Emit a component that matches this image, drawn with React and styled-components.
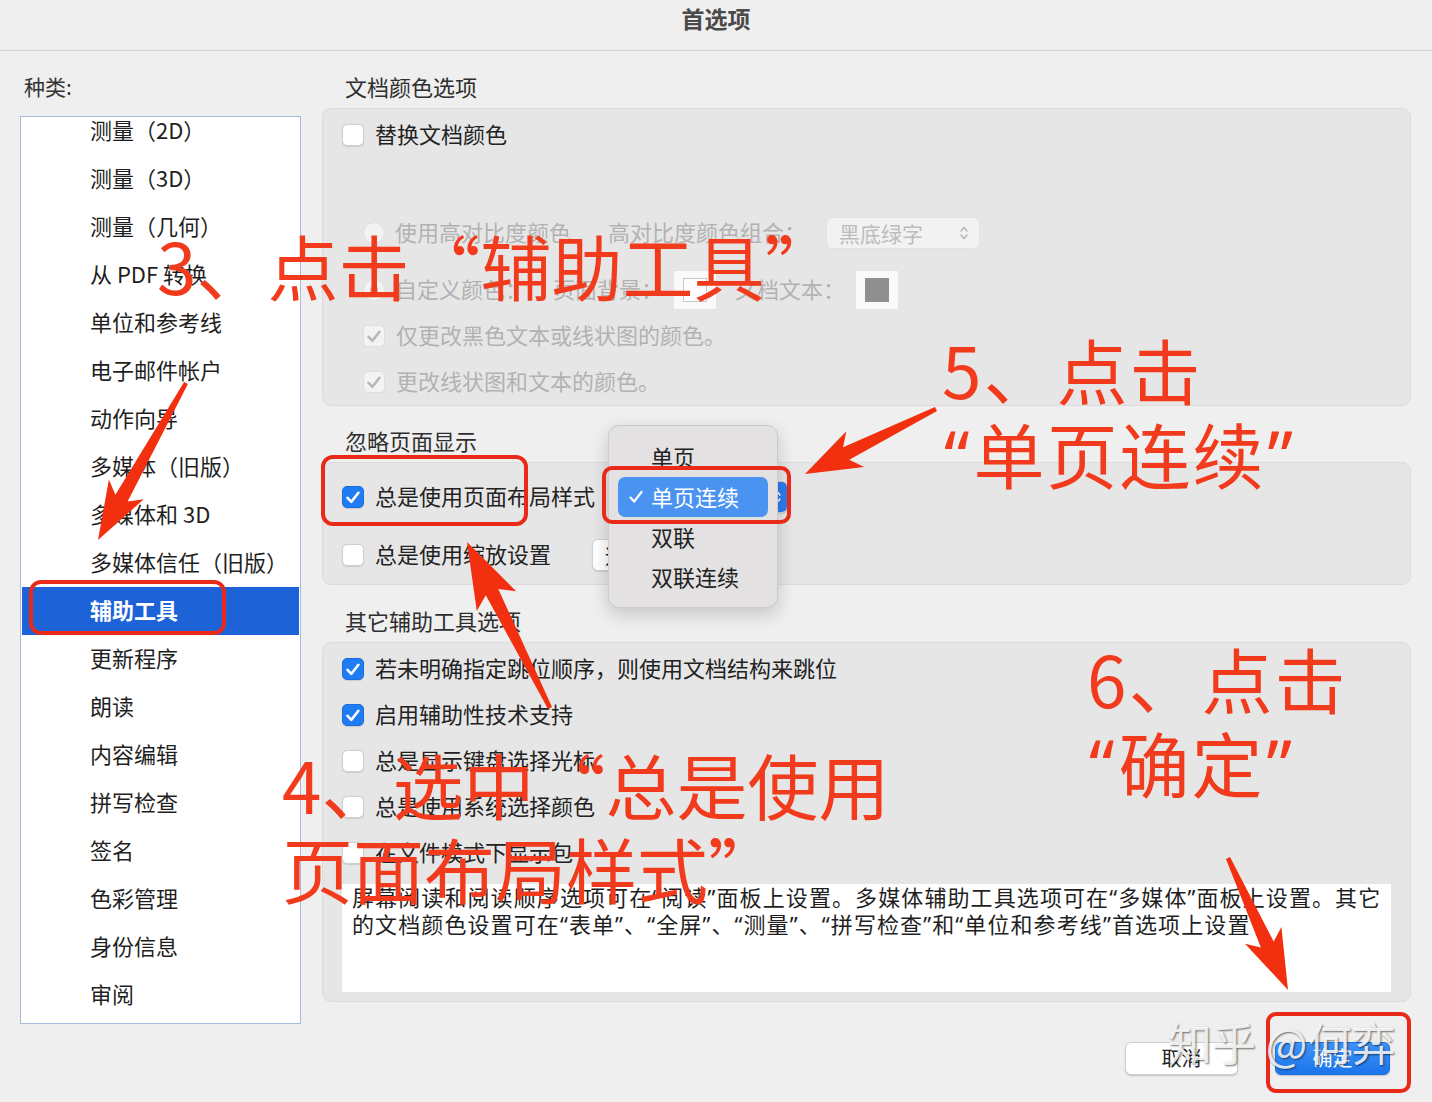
import React from 'react';
import styled, { createGlobalStyle } from 'styled-components';

const GlobalStyle = createGlobalStyle`
  html, body {
    margin: 0;
    padding: 0;
    background: #efefef;
  }
  body {
    font-family: "Noto Sans CJK SC", "Noto Sans", sans-serif;
    color: #262626;
  }
  * {
    box-sizing: border-box;
  }
`;

const categories = [
    '测量（2D）',
    '测量（3D）',
    '测量（几何）',
    '从 PDF 转换',
    '单位和参考线',
    '电子邮件帐户',
    '动作向导',
    '多媒体（旧版）',
    '多媒体和 3D',
    '多媒体信任（旧版）',
    '辅助工具',
    '更新程序',
    '朗读',
    '内容编辑',
    '拼写检查',
    '签名',
    '色彩管理',
    '身份信息',
    '审阅',
];

const menuItems = ['单页', '单页连续', '双联', '双联连续'];

const RED = '#f23b1d';

// tapered arrow, thin tail -> barbed head
function arrowPoints([x1, y1], [x2, y2], head = 40, len = 48) {
    const L = Math.hypot(x2 - x1, y2 - y1);
    const ux = (x2 - x1) / L;
    const uy = (y2 - y1) / L;
    const nx = -uy;
    const ny = ux;
    const bx = x2 - ux * len;
    const by = y2 - uy * len;
    const wx = x2 - ux * (len + 10);
    const wy = y2 - uy * (len + 10);
    const p = (x, y, w) => `${(x + nx * w).toFixed(1)},${(y + ny * w).toFixed(1)}`;
    return [
        p(x1, y1, 2.2),
        p(bx, by, 7),
        p(wx, wy, head / 2),
        `${x2},${y2}`,
        p(wx, wy, -head / 2),
        p(bx, by, -7),
        p(x1, y1, -2.2),
    ].join(' ');
}

function CheckBox({ checked, disabled }) {
    return (
        <Check $checked={checked} $disabled={disabled}>
            {checked && (
                <svg viewBox="0 0 22 22" width="22" height="22">
                    <path
                        d="M5.5 11.8l3.9 4 7-9"
                        fill="none"
                        stroke={disabled ? '#b8b8b8' : '#fff'}
                        strokeWidth="2.6"
                        strokeLinecap="round"
                        strokeLinejoin="round"
                    />
                </svg>
            )}
        </Check>
    );
}

function Chevrons({ color }) {
    return (
        <svg viewBox="0 0 10 18" width="10" height="18">
            <path d="M2 7l3-3.5L8 7M2 11l3 3.5L8 11" fill="none" stroke={color} strokeWidth="1.6" strokeLinecap="round" strokeLinejoin="round" />
        </svg>
    );
}

function App() {
    return (
        <Window>
            <GlobalStyle />
            <TitleBar>首选项</TitleBar>

            <Content>
                <Sidebar>
                    <Label>种类:</Label>
                    <CategoryList>
                        <CategoryScroll>
                            {categories.map((c) => (
                                <Category key={c} $active={c === '辅助工具'}>{c}</Category>
                            ))}
                        </CategoryScroll>
                    </CategoryList>
                </Sidebar>

                <Main>
                    <Section>
                        <SectionTitle>文档颜色选项</SectionTitle>
                        <Group>
                            <Row>
                                <CheckBox />
                                <RowText>替换文档颜色</RowText>
                            </Row>
                            <Row $indent $mt={52} $disabled>
                                <Radio />
                                <RowText $gap={10}>使用高对比度颜色</RowText>
                                <RowText $gap={37}>高对比度颜色组合：</RowText>
                                <Select $gap={20} $w={154} $disabled>
                                    <span>黑底绿字</span>
                                    <Chevrons color="#b9b9b9" />
                                </Select>
                            </Row>
                            <Row $indent $mt={11} $disabled>
                                <Radio $on />
                                <RowText $gap={10}>自定义颜色：</RowText>
                                <RowText $gap={26}>页面背景：</RowText>
                                <ColorWell $gap={10}>
                                    <Swatch $fill="#ffffff" />
                                </ColorWell>
                                <RowText $gap={18}>文档文本：</RowText>
                                <ColorWell $gap={10}>
                                    <Swatch $fill="#8f8f8f" />
                                </ColorWell>
                            </Row>
                            <Row $indent $disabled>
                                <CheckBox checked disabled />
                                <RowText>仅更改黑色文本或线状图的颜色。</RowText>
                            </Row>
                            <Row $indent $disabled>
                                <CheckBox checked disabled />
                                <RowText>更改线状图和文本的颜色。</RowText>
                            </Row>
                        </Group>
                    </Section>

                    <Section $mt={21}>
                        <SectionTitle>忽略页面显示</SectionTitle>
                        <Group $pt={5}>
                            <Row $h={58}>
                                <CheckBox checked />
                                <RowText>总是使用页面布局样式</RowText>
                                <PopupAnchor>
                                    <Select $w={180} $cap>
                                        <span>单页连续</span>
                                        <Cap>
                                            <Chevrons color="#fff" />
                                        </Cap>
                                    </Select>
                                    <Menu>
                                        {menuItems.map((m) => (
                                            <MenuItem key={m} $active={m === '单页连续'}>
                                                <Tick>
                                                    {m === '单页连续' && (
                                                        <svg viewBox="0 0 16 16" width="16" height="16">
                                                            <path d="M2.5 8.6l3.6 4L13.5 3" fill="none" stroke="#fff" strokeWidth="2.2" strokeLinecap="round" strokeLinejoin="round" />
                                                        </svg>
                                                    )}
                                                </Tick>
                                                {m}
                                            </MenuItem>
                                        ))}
                                    </Menu>
                                </PopupAnchor>
                            </Row>
                            <Row $h={58}>
                                <CheckBox />
                                <RowText>总是使用缩放设置</RowText>
                                <Select $gap={41} $w={180}>
                                    <span>适合宽度</span>
                                    <Chevrons color="#555" />
                                </Select>
                            </Row>
                        </Group>
                    </Section>

                    <Section $mt={22}>
                        <SectionTitle>其它辅助工具选项</SectionTitle>
                        <Group $pb={9}>
                            <Row>
                                <CheckBox checked />
                                <RowText>若未明确指定跳位顺序，则使用文档结构来跳位</RowText>
                            </Row>
                            <Row>
                                <CheckBox checked />
                                <RowText>启用辅助性技术支持</RowText>
                            </Row>
                            <Row>
                                <CheckBox />
                                <RowText>总是显示键盘选择光标</RowText>
                            </Row>
                            <Row>
                                <CheckBox />
                                <RowText>总是使用系统选择颜色</RowText>
                            </Row>
                            <Row>
                                <CheckBox />
                                <RowText>在文件模式下显示包</RowText>
                            </Row>
                            <Note>
                                屏幕阅读和阅读顺序选项可在“阅读”面板上设置。多媒体辅助工具选项可在“多媒体”面板上设置。其它
                                <br />
                                的文档颜色设置可在“表单”、“全屏”、“测量”、“拼写检查”和“单位和参考线”首选项上设置
                            </Note>
                        </Group>
                    </Section>
                </Main>
            </Content>

            <Footer>
                <Button>取消</Button>
                <Button $primary>确定</Button>
            </Footer>

            <Overlay>
                <svg width="1432" height="1102" viewBox="0 0 1432 1102">
                    <g fill="none" stroke="#ea2a18" strokeWidth="4">
                        <rect x="31" y="582" width="193" height="51" rx="10" />
                        <rect x="323" y="457" width="203" height="67" rx="10" />
                        <rect x="604" y="468" width="185" height="54" rx="8" />
                        <rect x="1268" y="1014" width="141" height="77" rx="8" />
                    </g>
                    <g fill="#f2300f">
                        <polygon points={arrowPoints([186, 383], [98, 540], 40, 48)} />
                        <polygon points={arrowPoints([936, 409], [805, 474], 40, 46)} />
                        <polygon points={arrowPoints([550, 708], [467, 542], 44, 56)} />
                        <polygon points={arrowPoints([1228, 858], [1288, 990], 40, 50)} />
                    </g>
                </svg>
                <Callout $x={157} $y={222}>3、点击“辅助工具”</Callout>
                <Callout $x={942} $y={326} $spacing={2}>
                    5、点击
                    <br />
                    <Quote>“</Quote>单页连续<Quote>”</Quote>
                </Callout>
                <Callout $x={1087} $y={635} $spacing={2}>
                    6、点击
                    <br />
                    <Quote>“</Quote>确定<Quote>”</Quote>
                </Callout>
                <Callout $x={282} $y={741}>
                    4、选中“总是使用
                    <br />
                    页面布局样式”
                </Callout>
                <Watermark>知乎 @何弈</Watermark>
            </Overlay>
        </Window>
    );
}

export default App;

const Window = styled.div`
    position: relative;
    width: 1432px;
    height: 1102px;
    background: #efefef;
    overflow: hidden;
`;

const TitleBar = styled.div`
    height: 51px;
    padding-top: 2px;
    border-bottom: 1px solid #d2d2d2;
    display: flex;
    justify-content: center;
    font-size: 23px;
    line-height: 32px;
    font-weight: 600;
    color: #4a4a4a;
`;

const Content = styled.div`
    display: grid;
    grid-template-columns: 281px 1fr;
    column-gap: 21px;
    align-items: start;
    padding: 22px 22px 0 20px;
`;

const Sidebar = styled.div`
    display: flex;
    flex-direction: column;
`;

const Label = styled.div`
    font-size: 21px;
    line-height: 26px;
    padding: 0 0 4px 4px;
    color: #333;
    margin-bottom: 13px;
`;

const CategoryList = styled.div`
    height: 908px;
    background: #fff;
    border: 1px solid #a8badb;
    padding: 0 1px;
    overflow: hidden;
`;

const CategoryScroll = styled.div`
    margin-top: -10px;
`;

const Category = styled.div`
    height: 48px;
    line-height: 44px;
    padding: 0 0 4px 68px;
    font-size: 22px;
    white-space: nowrap;
    color: ${(p) => (p.$active ? '#fff' : '#1f1f1f')};
    background: ${(p) => (p.$active ? '#1d62d7' : 'transparent')};
    font-weight: ${(p) => (p.$active ? 600 : 400)};
`;

const Main = styled.div`
    display: flex;
    flex-direction: column;
`;

const Section = styled.section`
    margin-top: ${(p) => p.$mt || 0}px;
`;

const SectionTitle = styled.div`
    font-size: 22px;
    line-height: 26px;
    padding: 0 0 4px 23px;
    margin-bottom: 5px;
    color: #2e2e2e;
`;

const Group = styled.div`
    background: #e7e6e6;
    border: 1px solid #dcdbdb;
    border-radius: 9px;
    padding: ${(p) => p.$pt ?? 3}px 19px ${(p) => p.$pb ?? 0}px 19px;
`;

const Row = styled.div`
    display: flex;
    align-items: center;
    height: ${(p) => p.$h || 46}px;
    margin-top: ${(p) => p.$mt || 0}px;
    padding-left: ${(p) => (p.$indent ? 21 : 0)}px;
    color: ${(p) => (p.$disabled ? '#b2b2b2' : '#222')};
`;

const RowText = styled.span`
    font-size: 22px;
    line-height: 28px;
    padding-bottom: 4px;
    white-space: nowrap;
    margin-left: ${(p) => p.$gap ?? 11}px;
`;

const Check = styled.span`
    flex: none;
    width: 22px;
    height: 22px;
    border-radius: 5px;
    display: inline-flex;
    background: ${(p) => (p.$checked && !p.$disabled ? '#1f7cf2' : p.$disabled ? '#f3f3f3' : '#fff')};
    border: 1px solid ${(p) => (p.$checked && !p.$disabled ? '#1a6fe0' : p.$disabled ? '#dedede' : '#cfcfcf')};
    box-shadow: ${(p) => (p.$disabled ? 'none' : '0 0.5px 1px rgba(0, 0, 0, 0.12)')};
    svg {
        margin: -1px;
    }
`;

const Radio = styled.span`
    flex: none;
    width: 22px;
    height: 22px;
    border-radius: 50%;
    background: #f3f3f3;
    border: 1px solid #e0e0e0;
    display: inline-flex;
    align-items: center;
    justify-content: center;
    &::after {
        content: '';
        width: 8px;
        height: 8px;
        border-radius: 50%;
        background: ${(p) => (p.$on ? '#bdbdbd' : 'transparent')};
    }
`;

const Select = styled.div`
    flex: none;
    position: relative;
    margin-left: ${(p) => p.$gap || 0}px;
    width: ${(p) => p.$w}px;
    height: 32px;
    border-radius: 6px;
    display: flex;
    align-items: center;
    justify-content: space-between;
    padding: 0 ${(p) => (p.$cap ? 0 : 10)}px 0 12px;
    font-size: 21px;
    color: ${(p) => (p.$disabled ? '#bcbcbc' : '#222')};
    background: ${(p) => (p.$disabled ? '#f2f2f2' : '#fff')};
    border: 1px solid ${(p) => (p.$disabled ? '#e2e2e2' : '#d2d2d2')};
    box-shadow: ${(p) => (p.$disabled ? 'none' : '0 1px 1px rgba(0, 0, 0, 0.12)')};
    overflow: hidden;
`;

const Cap = styled.span`
    align-self: stretch;
    width: 20px;
    display: flex;
    align-items: center;
    justify-content: center;
    background: #2b7cf0;
`;

const ColorWell = styled.span`
    flex: none;
    margin-left: ${(p) => p.$gap || 0}px;
    width: 44px;
    height: 40px;
    background: #fafafa;
    border: 1px solid #e3e3e3;
    display: inline-flex;
    align-items: center;
    justify-content: center;
`;

const Swatch = styled.span`
    width: 24px;
    height: 24px;
    background: ${(p) => p.$fill};
    border: 1px solid ${(p) => (p.$fill === '#ffffff' ? '#c8c8c8' : p.$fill)};
`;

const PopupAnchor = styled.div`
    position: relative;
    margin-left: 13px;
`;

const Menu = styled.div`
    position: absolute;
    left: 0;
    top: -56px;
    width: 170px;
    padding: 11px 0 10px;
    border-radius: 11px;
    background: #e3e1e1;
    border: 1px solid #cbc9c9;
    box-shadow: 0 6px 18px rgba(0, 0, 0, 0.18);
    z-index: 5;
`;

const MenuItem = styled.div`
    height: 40px;
    margin: 0 9px;
    padding: 0 0 3px 10px;
    display: flex;
    align-items: center;
    border-radius: 7px;
    font-size: 22px;
    color: ${(p) => (p.$active ? '#fff' : '#222')};
    background: ${(p) => (p.$active ? '#4b93f1' : 'transparent')};
`;

const Tick = styled.span`
    width: 23px;
    display: flex;
    align-items: center;
    padding-top: 3px;
`;

const Note = styled.div`
    margin-top: 8px;
    height: 108px;
    background: #fff;
    padding: 0 10px;
    font-family: "Noto Sans", "Noto Sans CJK SC", sans-serif;
    font-size: 22px;
    letter-spacing: 1.1px;
    line-height: 27px;
    white-space: nowrap;
    color: #1f1f1f;
`;

const Footer = styled.div`
    display: flex;
    justify-content: flex-end;
    gap: 37px;
    margin-top: 18px;
    padding-right: 42px;
`;

const Button = styled.div`
    width: ${(p) => (p.$primary ? 115 : 113)}px;
    height: 33px;
    border-radius: 6px;
    display: flex;
    align-items: center;
    justify-content: center;
    padding-bottom: 2px;
    font-size: 20px;
    color: ${(p) => (p.$primary ? '#fff' : '#222')};
    background: ${(p) => (p.$primary ? 'linear-gradient(#3f92f7, #1b74ea)' : '#fff')};
    border: 1px solid ${(p) => (p.$primary ? '#1b6fe0' : '#d0d0d0')};
    box-shadow: 0 1px 1.5px rgba(0, 0, 0, 0.2);
`;

const Overlay = styled.div`
    position: absolute;
    inset: 0;
    pointer-events: none;
    z-index: 10;
    svg {
        position: absolute;
        left: 0;
        top: 0;
    }
`;

const Callout = styled.div`
    position: absolute;
    left: ${(p) => p.$x}px;
    top: ${(p) => p.$y}px;
    color: ${RED};
    font-size: 71px;
    line-height: 84px;
    letter-spacing: ${(p) => p.$spacing || 0}px;
    white-space: nowrap;
`;

const Quote = styled.span`
    font-family: "Noto Sans", sans-serif;
    margin: 0 2px;
`;

const Watermark = styled.div`
    position: absolute;
    left: 1168px;
    top: 1017px;
    font-size: 44px;
    line-height: 50px;
    white-space: nowrap;
    color: rgba(255, 255, 255, 0.85);
    text-shadow: 1px 1px 2px rgba(0, 0, 0, 0.55);
`;
